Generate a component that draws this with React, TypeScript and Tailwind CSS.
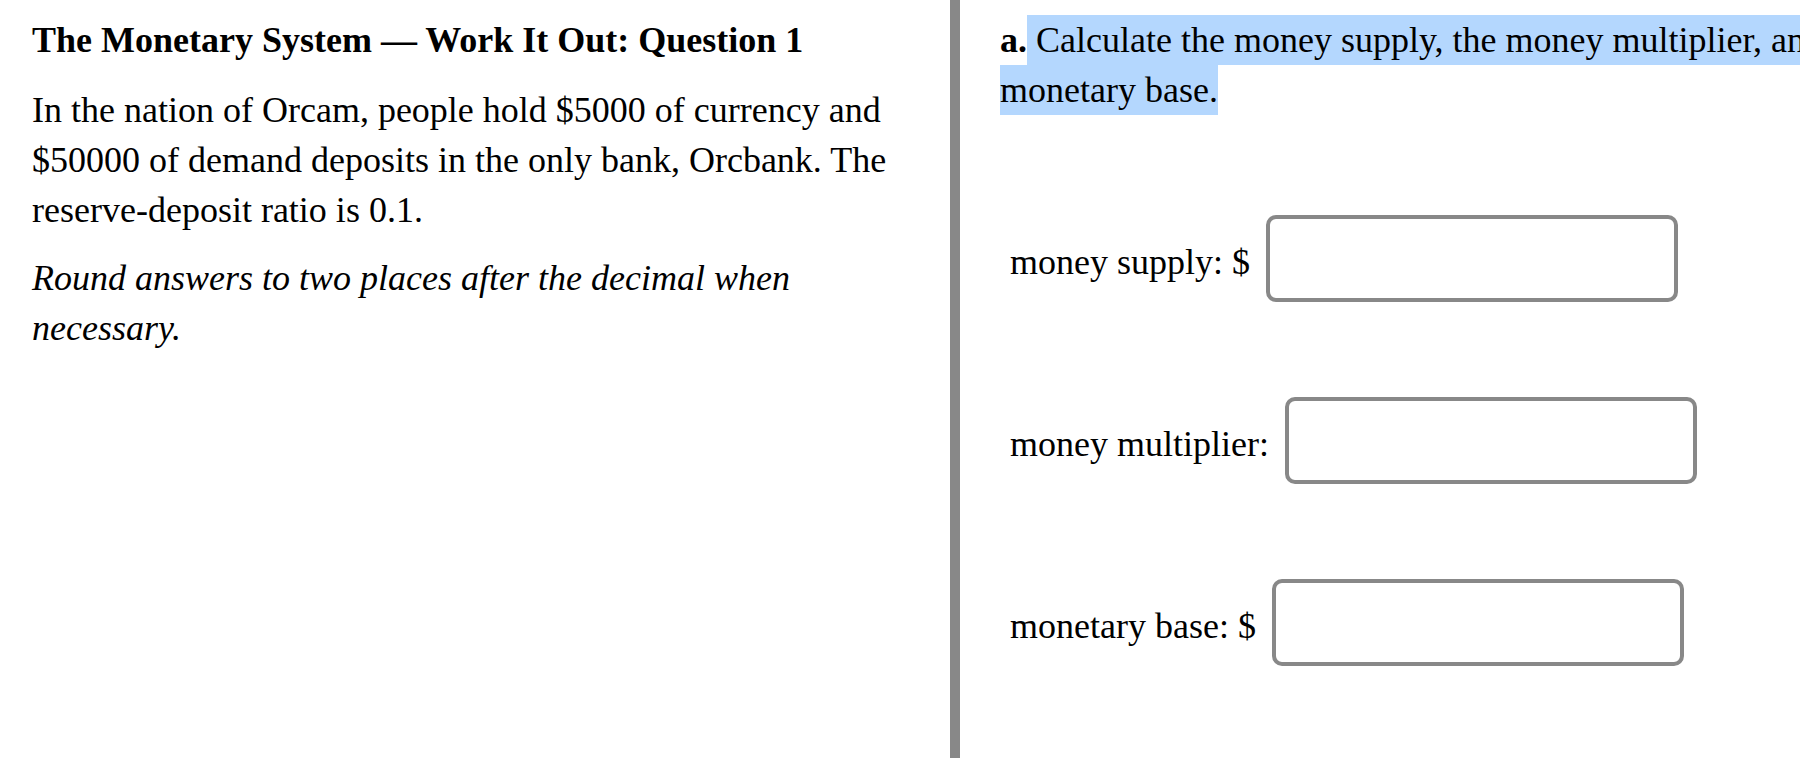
import { useState } from "react";

const fields = [
  { id: "supply", label: "money supply: $" },
  { id: "multiplier", label: "money multiplier:" },
  { id: "base", label: "monetary base: $" },
];

export default function App() {
  const [values, setValues] = useState<Record<string, string>>({});

  return (
    <div className="flex h-[758px] w-[1800px] overflow-hidden bg-white text-[36px] leading-[50px] text-black font-['Liberation_Serif','Times_New_Roman',serif]">
      {/* enunciado */}
      <div className="w-[950px] shrink-0 px-8 pt-[15px]">
        <h1 className="font-bold">The Monetary System — Work It Out: Question 1</h1>
        <p className="mt-[20px]">
          In the nation of Orcam, people hold $5000 of currency and $50000 of demand deposits in the only
          bank, Orcbank. The reserve-deposit ratio is 0.1.
        </p>
        <p className="mt-[18px] italic">Round answers to two places after the decimal when necessary.</p>
      </div>

      <div className="w-[10px] shrink-0 self-stretch bg-[#888888]" />

      {/* pergunta */}
      <div className="min-w-0 flex-1 pl-[40px] pt-[15px]">
        <p className="w-[960px]">
          <span className="font-bold">a.</span>
          <span className="bg-[#b4d7fe] py-[5px]">
            {" "}Calculate the money supply, the money multiplier, and the monetary base.
          </span>
        </p>

        <div className="mt-[100px] flex flex-col gap-[95px] pl-[10px]">
          {fields.map((f) => (
            <label key={f.id} className="flex items-center gap-4">
              <span className="whitespace-nowrap pt-[6px]">{f.label}</span>
              <input
                type="text"
                value={values[f.id] || ""}
                onChange={(e) => setValues({ ...values, [f.id]: e.target.value })}
                className="h-[87px] w-[412px] rounded-[10px] border-4 border-[#888888] bg-white px-3 outline-none"
              />
            </label>
          ))}
        </div>
      </div>
    </div>
  );
}
